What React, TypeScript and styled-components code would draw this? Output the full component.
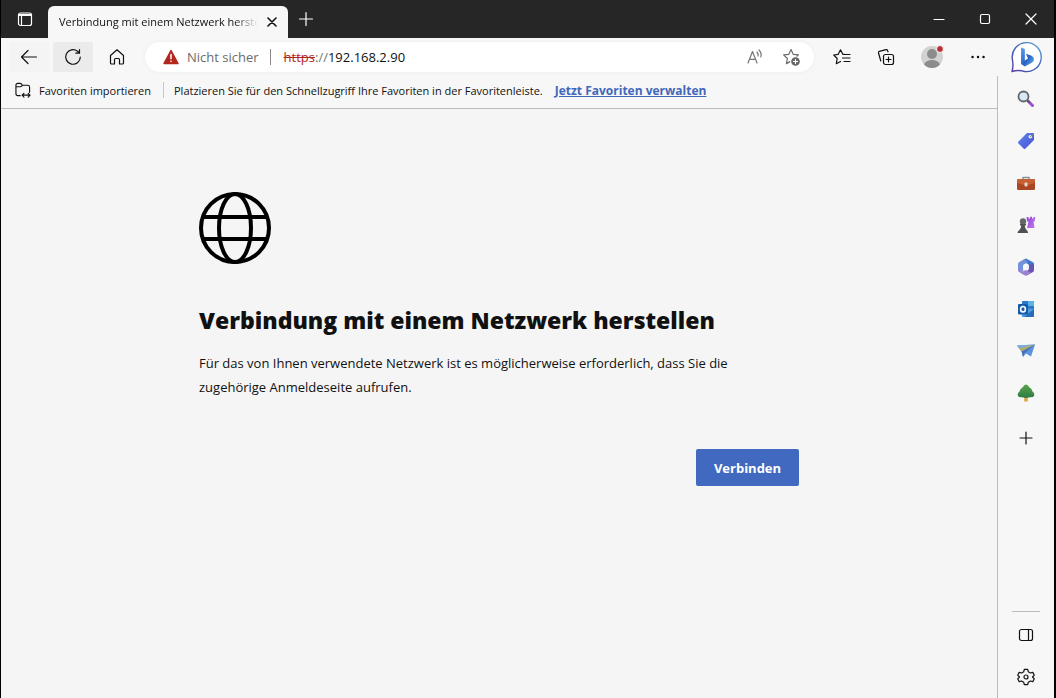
import React from "react";
import styled, { createGlobalStyle } from "styled-components";

const Global = createGlobalStyle`
  *, *::before, *::after { box-sizing: border-box; }
  body {
    margin: 0;
    font-family: "Open Sans", "Noto Sans", sans-serif;
    font-size: 11px;
    color: #111;
  }
  svg { display: block; }
  button { padding: 0; border: 0; background: transparent; font: inherit; color: inherit; }
`;

const BrowserWindow = styled.div`
  display: flex;
  flex-direction: column;
  min-height: 100vh;
  border: solid #000;
  border-width: 0 2px 0 1px;
  background: #f7f7f7;
`;

const TitleBar = styled.header`
  display: flex;
  align-items: stretch;
  height: 38px;
  background: #262626;
  color: #fff;
`;

const TitleButton = styled.button<{ $width: number }>`
  display: flex;
  align-items: center;
  justify-content: center;
  width: ${(p) => p.$width}px;
`;

const Tab = styled.div`
  display: flex;
  align-items: center;
  width: 240px;
  margin-top: 6px;
  padding: 0 6px 0 11px;
  border-radius: 6px 6px 0 0;
  background: #f7f7f7;
  color: #111;
`;

const TabTitle = styled.span`
  flex: 1;
  min-width: 0;
  overflow: hidden;
  white-space: nowrap;
  line-height: 20px;
  mask-image: linear-gradient(to right, #000 88%, transparent 100%);
`;

const TabClose = styled.button`
  display: flex;
  align-items: center;
  justify-content: center;
  width: 20px;
  height: 20px;
  margin-left: 4px;
`;

const WindowControls = styled.div`
  display: flex;
  margin-left: auto;
`;

const Toolbar = styled.nav`
  display: flex;
  align-items: center;
  gap: 4px;
  height: 38px;
  padding: 0 8px;
`;

const ToolButton = styled.button<{ $shade?: string }>`
  display: flex;
  flex: none;
  align-items: center;
  justify-content: center;
  width: 40px;
  height: 30px;
  border-radius: 2px;
  background: ${(p) => p.$shade ?? "transparent"};
`;

const ToolGroup = styled.div<{ $gap: number; $before?: number }>`
  display: flex;
  flex: none;
  align-items: center;
  gap: ${(p) => p.$gap}px;
  margin-left: ${(p) => p.$before ?? 0}px;
`;

const AddressBar = styled.form`
  display: flex;
  flex: 1;
  align-items: center;
  min-width: 0;
  height: 30px;
  margin: 0 4px;
  padding: 0 12px 0 18px;
  border-radius: 15px;
  background: #fff;
  box-shadow: 0 0 4px #ececec;
  font-size: 13px;
  line-height: 20px;
`;

const Security = styled.button`
  display: flex;
  align-items: center;
  gap: 8px;
  padding-right: 11px;
  border-right: 1px solid #8a8a8a;
  margin-right: 13px;
  height: 16px;
  color: #6b6b6b;
  white-space: nowrap;
`;

const Scheme = styled.span`
  color: #767676;
  s { color: #b3261e; }
`;

const UrlInput = styled.input`
  flex: 1;
  min-width: 0;
  padding: 0;
  border: 0;
  outline: 0;
  background: transparent;
  font: inherit;
  color: #111;
`;

const AddressAction = styled.button`
  display: flex;
  align-items: center;
  justify-content: center;
  width: 22px;
  height: 24px;
`;

const Body = styled.div`
  display: flex;
  flex: 1;
`;

const Main = styled.div`
  display: flex;
  flex: 1;
  flex-direction: column;
  min-width: 0;
`;

const FavoritesBar = styled.div`
  display: flex;
  align-items: center;
  height: 33px;
  padding: 0 14px 4px;
  border-bottom: 1px solid #bcbcbc;
  white-space: nowrap;
`;

const ImportButton = styled.button`
  display: flex;
  align-items: center;
  gap: 8px;
  padding-right: 12px;
  margin-right: 10px;
  border-right: 1px solid #c8c8c8;
`;

const ManageLink = styled.a`
  margin-left: 12px;
  font-size: 12px;
  font-weight: 700;
  color: #4068ba;
`;

const Page = styled.main`
  flex: 1;
  padding: 83px 24px 40px;
  background: #f5f5f5;
`;

const Notice = styled.section`
  display: flex;
  flex-direction: column;
  max-width: 600px;
  margin: 0 auto;
`;

const Heading = styled.h1`
  margin: 40px 0 15px;
  font-size: 23px;
  font-weight: 800;
  line-height: 32px;
`;

const Message = styled.p`
  max-width: 560px;
  margin: 0 0 50px;
  font-size: 13px;
  line-height: 24px;
`;

const ConnectButton = styled.button`
  align-self: flex-end;
  min-width: 103px;
  height: 37px;
  border-radius: 2px;
  background: #4069bf;
  color: #fff;
  font-size: 13px;
  font-weight: 700;
`;

const Sidebar = styled.aside`
  display: flex;
  flex: none;
  flex-direction: column;
  align-items: center;
  width: 57px;
  padding-top: 2px;
  border-left: 1px solid #bcbcbc;
`;

const SideButton = styled.button`
  display: flex;
  align-items: center;
  justify-content: center;
  width: 42px;
  height: 42px;
`;

const SideApps = styled.div`
  margin-bottom: 3px;
`;

const SideBottom = styled.div`
  display: flex;
  flex-direction: column;
  align-items: center;
  margin-top: auto;
`;

const SideDivider = styled.hr`
  width: 28px;
  margin: 0 0 2px;
  border: 0;
  border-top: 1px solid #bcbcbc;
`;

type IconProps = { size?: number; box?: number; color?: string; width?: number; children: React.ReactNode };

const Icon = ({ size = 20, box = size, color = "currentColor", width = 1.2, children }: IconProps) => (
  <svg
    width={size}
    height={size}
    viewBox={`0 0 ${box} ${box}`}
    fill="none"
    stroke={color}
    strokeWidth={width}
    strokeLinecap="round"
    strokeLinejoin="round"
    aria-hidden="true"
  >
    {children}
  </svg>
);

const STAR = "M10 2.5 12.2 7.3 17.4 7.9 13.6 11.5 14.6 16.6 10 14.1 5.4 16.6 6.4 11.5 2.6 7.9 7.8 7.3Z";

const Globe = () => (
  <Icon size={72} width={4} color="#000">
    <circle cx="36" cy="36" r="34" />
    <ellipse cx="36" cy="36" rx="16" ry="34" />
    <path d="M5 25H67M5 47H67" />
  </Icon>
);

const BingLogo = () => (
  <Icon size={34} width={1.4}>
    <defs>
      <linearGradient id="bubble" x1="0" y1="1" x2="1" y2="0">
        <stop offset="0" stopColor="#5b3ea5" />
        <stop offset=".5" stopColor="#3b63bb" />
        <stop offset="1" stopColor="#6aa9dc" />
      </linearGradient>
      <linearGradient id="bing" x1="0" y1="0" x2="1" y2="1">
        <stop offset="0" stopColor="#5ba6ee" />
        <stop offset=".55" stopColor="#2c62c4" />
        <stop offset="1" stopColor="#62c2ee" />
      </linearGradient>
    </defs>
    <path d="M3 31.500Q4.600 27 3.500 20A14.500 14.500 0 1 1 13 30.800Q8 30 3 31.500Z" fill="#fff" stroke="url(#bubble)" />
    <path
      d="M12 7.500 15.800 9V20.500L19 18.600 17.300 14.700Q16.800 13.500 18 13.900L22.500 15.700Q25 16.800 25 19.500 25 21.500 22.800 22.800L15.800 26.600 12 23.900Z"
      fill="url(#bing)"
      stroke="none"
    />
  </Icon>
);

const sidebarApps = [
  {
    label: "Suchen",
    art: (
      <>
        <path d="M12.500 12.500 16.500 16.500" stroke="#a24bd0" strokeWidth="3" />
        <path d="M11 11 13 13" stroke="#555" strokeWidth="2" />
        <circle cx="7.500" cy="7.500" r="5" fill="#d9e8f5" stroke="#62666c" strokeWidth="1.800" />
      </>
    ),
  },
  {
    label: "Shopping",
    art: (
      <>
        <path d="M11 2H17Q18 2 18 3V9L9.500 17.500Q8.500 18.500 7.500 17.500L2.500 12.500Q1.500 11.500 2.500 10.500Z" fill="url(#tag)" />
        <circle cx="14.300" cy="5.700" r="1.800" fill="#f2eecb" />
        <path d="M14.500 5.500 17.500 3" stroke="#7a8b72" strokeWidth="1" />
      </>
    ),
  },
  {
    label: "Tools",
    art: (
      <>
        <path d="M7 7V4.500H13V7" stroke="#8c9094" strokeWidth="1.500" />
        <rect x="1" y="6" width="18" height="11" rx="1.500" fill="#a94623" />
        <path d="M1 7.500Q1 6 2.500 6H17.500Q19 6 19 7.500V10L12 12H8L1 10Z" fill="#c65f31" />
        <rect x="8.500" y="9.500" width="3" height="4" rx="1" fill="#e2d9d0" />
      </>
    ),
  },
  {
    label: "Spiele",
    art: (
      <>
        <path d="M10.500 2H12.500V3.500H14V1.800H16V3.500H17.500V2H19.300L18.500 6.500H17.500L18.500 13H11L12.500 6.500H11.200Z" fill="url(#rook)" />
        <circle cx="7" cy="6.500" r="3.200" fill="#66666b" />
        <path d="M4 9H10V10.500H8.700Q8.700 13.500 11 15.500 12 16.200 12 18H1.500Q1.500 16.200 3 15.500 5.300 13.500 5.300 10.500H4Z" fill="#505055" />
      </>
    ),
  },
  {
    label: "Microsoft 365",
    art: (
      <>
        <path d="M10 1.500 17 5.300Q18 6 18 7.200V13L12.500 10V7.500L7.500 4.500 8 2.500Z" fill="#3f78c8" />
        <path d="M18 7V13Q18 14.300 17 15L10.500 18.500 6 16.500 12.500 13V8Z" fill="#6a55b5" />
        <path d="M8 2.300 3 5.300Q2 6 2 7.200V13L7.200 14.500V8L12 5Z" fill="#7392dc" />
        <path d="M2 12V13Q2 14.400 3 15L8.500 18.200Q10 19 11.500 18L15 15.800 10 13 6.500 14.500Z" fill="#9b80d4" />
        <path d="M10 6.700 12.900 8.300V11.700L10 13.300 7.100 11.700V8.300Z" fill="#f7f7f7" />
      </>
    ),
  },
  {
    label: "Outlook",
    art: (
      <>
        <rect x="6" y="2" width="12" height="13" rx="1" fill="#2f78c6" />
        <path d="M12 2H17Q18 2 18 3V7H12Z" fill="#58b4e8" />
        <path d="M5 9 18 10V17Q18 18 17 18H6Z" fill="#4da0de" />
        <path d="M8 18 18 10V17Q18 18 17 18Z" fill="#276dbc" />
        <rect x="2" y="5" width="10" height="10.500" rx="1" fill="#155ba7" />
        <ellipse cx="7" cy="10.200" rx="2.400" ry="2.700" stroke="#fff" strokeWidth="1.600" />
      </>
    ),
  },
  {
    label: "Drop",
    art: (
      <>
        <path d="M1 4.500 19 3.500 15 15.500 10 12.500 7 16 5.500 10.500Z" fill="#5c92dd" />
        <path d="M1 4.500 19 3.500 5.500 10.500Z" fill="#76aee0" />
        <path d="M3 7 19 3.500 5.500 10.500Z" fill="#b3ab70" />
        <path d="M5.800 10.500 19 3.500 8.500 12 7 16Z" fill="#4470ba" />
      </>
    ),
  },
  {
    label: "E-Tree",
    art: (
      <>
        <path d="M8.200 13H11.800V18.500H8.200Z" fill="#dda647" />
        <path d="M10 1.500Q12 1.500 13 4 16 5.500 16.500 8.500 19 10.500 18 13 17 14.500 14 14.200L10 15 6 14.200Q3 14.500 2 13 1 10.500 3.500 8.500 4 5.500 7 4 8 1.500 10 1.500Z" fill="url(#tree)" />
      </>
    ),
  },
];

const SidebarGradients = () => (
  <svg width="0" height="0" aria-hidden="true">
    <defs>
      <linearGradient id="tag" x1="0" y1="0" x2="1" y2="1">
        <stop offset="0" stopColor="#5c85f0" />
        <stop offset="1" stopColor="#4b4fd2" />
      </linearGradient>
      <linearGradient id="rook" x1="0" y1="0" x2="1" y2="1">
        <stop offset="0" stopColor="#8f45dc" />
        <stop offset="1" stopColor="#c47cec" />
      </linearGradient>
      <linearGradient id="tree" x1="0" y1="0" x2="0" y2="1">
        <stop offset="0" stopColor="#5aa54b" />
        <stop offset="1" stopColor="#2d7a43" />
      </linearGradient>
    </defs>
  </svg>
);

export default function App() {
  return (
    <BrowserWindow>
      <Global />
      <TitleBar>
        <TitleButton $width={47} aria-label="Tabaktionen">
          <Icon size={16}>
            <rect x="1.500" y="2" width="13" height="12.500" rx="2" />
            <path d="M2 3.500H14M2 4.500H14M4.500 5V14" />
          </Icon>
        </TitleButton>
        <Tab>
          <TabTitle>Verbindung mit einem Netzwerk herstellen</TabTitle>
          <TabClose aria-label="Tab schließen">
            <Icon size={10} width={1.6}>
              <path d="M1 1 9 9M9 1 1 9" />
            </Icon>
          </TabClose>
        </Tab>
        <TitleButton $width={36} aria-label="Neuer Tab">
          <Icon size={16}>
            <path d="M8 1.500V14.500M1.500 8H14.500" />
          </Icon>
        </TitleButton>
        <WindowControls>
          <TitleButton $width={46} aria-label="Minimieren">
            <Icon size={12}>
              <path d="M1 6.500H11" />
            </Icon>
          </TitleButton>
          <TitleButton $width={46} aria-label="Maximieren">
            <Icon size={12}>
              <rect x="1.500" y="1.500" width="9" height="9" rx="1.500" />
            </Icon>
          </TitleButton>
          <TitleButton $width={46} aria-label="Schließen">
            <Icon size={12}>
              <path d="M1 1 11 11M11 1 1 11" />
            </Icon>
          </TitleButton>
        </WindowControls>
      </TitleBar>

      <Toolbar>
        <ToolGroup $gap={4}>
          <ToolButton $shade="#f4f4f4" aria-label="Zurück">
            <Icon>
              <path d="M2.500 10H17.500M9 3.500 2.500 10 9 16.500" />
            </Icon>
          </ToolButton>
          <ToolButton $shade="#ebebeb" aria-label="Aktualisieren">
            <Icon>
              <path d="M17.300 10A7.300 7.300 0 1 1 14.500 4.200L16.500 6M16.500 2.500V6.200H12.800" />
            </Icon>
          </ToolButton>
          <ToolButton aria-label="Startseite">
            <Icon>
              <path d="M3.500 8.500 10 2.800 16.500 8.500V16Q16.500 17 15.500 17H12.500V12.500Q12.500 11.500 11.500 11.500H8.500Q7.500 11.500 7.500 12.500V17H4.500Q3.500 17 3.500 16Z" />
            </Icon>
          </ToolButton>
        </ToolGroup>

        <AddressBar onSubmit={(e) => e.preventDefault()}>
          <Security type="button">
            <Icon size={16}>
              <path d="M8 1.500 15 14.500H1Z" fill="#b3261e" stroke="#b3261e" strokeWidth="1.500" />
              <path d="M8 5.500V9.800M8 12.300V12.500" stroke="#fff" strokeWidth="1.500" />
            </Icon>
            Nicht sicher
          </Security>
          <Scheme>
            <s>https</s>://
          </Scheme>
          <UrlInput aria-label="Adresse" defaultValue="192.168.2.90" />
          <ToolGroup $gap={14}>
            <AddressAction type="button" aria-label="Laut vorlesen">
              <Icon color="#767676">
                <path d="M3 16 7.500 4.500 12 16M4.500 12.300H10.500M12 5Q13.500 6.800 13 9M14 3Q17 6 15.800 10" />
              </Icon>
            </AddressAction>
            <AddressAction type="button" aria-label="Zu Favoriten hinzufügen">
              <Icon color="#6b6b6b">
                <path d={STAR} />
                <circle cx="14.500" cy="14.500" r="5.300" fill="#fff" stroke="none" />
                <circle cx="14.500" cy="14.500" r="4.300" fill="#666" stroke="none" />
                <path d="M14.500 12.500V16.500M12.500 14.500H16.500" stroke="#fff" />
              </Icon>
            </AddressAction>
          </ToolGroup>
        </AddressBar>

        <ToolGroup $gap={4}>
          <ToolButton aria-label="Favoriten">
            <Icon>
              <path d="M12.500 7.300H10.800L8.500 2.800 6.200 7.300 1.700 8 5.200 11.500 4.300 16.700 8.500 14.500M12 7.500H18M10.500 11H18M12 14.500H18" />
            </Icon>
          </ToolButton>
          <ToolButton aria-label="Sammlungen">
            <Icon>
              <rect x="7.500" y="7.500" width="10" height="10" rx="2" />
              <path d="M12.500 10V15M10 12.500H15M4.800 14 2.500 6Q2.200 4.800 3.400 4.400L10 2.700Q11.200 2.400 11.600 3.600L12 4.800" />
            </Icon>
          </ToolButton>
        </ToolGroup>
        <ToolGroup $gap={6} $before={2}>
          <ToolButton aria-label="Profil">
            <Icon size={24}>
              <circle cx="12" cy="12" r="11" fill="#d2d2d0" stroke="none" />
              <circle cx="12" cy="9" r="5" fill="#8c8c8c" stroke="none" />
              <path d="M4 19.500Q6 15 12 15T20 19.500Q16.500 23 12 23T4 19.500Z" fill="#8c8c8c" stroke="none" />
              <circle cx="20" cy="4" r="3.500" fill="#b93232" stroke="#f7f7f7" strokeWidth="1" />
            </Icon>
          </ToolButton>
          <ToolButton aria-label="Einstellungen und mehr">
            <Icon>
              <path d="M4.500 10H4.600M10 10H10.100M15.500 10H15.600" strokeWidth="2.400" />
            </Icon>
          </ToolButton>
        </ToolGroup>
        <ToolGroup $gap={4} $before={4}>
          <ToolButton aria-label="Bing Chat">
            <BingLogo />
          </ToolButton>
        </ToolGroup>
      </Toolbar>

      <Body>
        <Main>
          <FavoritesBar>
            <ImportButton>
              <Icon size={16} box={17}>
                <path d="M5.500 14.500H3Q1 14.500 1 12.500V3.500Q1 1.500 3 1.500H5.500Q6.500 1.500 8 3.500H13.500Q15.500 3.500 15.500 5.500V11M1 5H5.500Q6.500 5 8 3.500M8 14H15.500M9.500 12 7.500 14 9.500 16M14 12 16 14 14 16" />
              </Icon>
              Favoriten importieren
            </ImportButton>
            <span>Platzieren Sie für den Schnellzugriff Ihre Favoriten in der Favoritenleiste.</span>
            <ManageLink href="#favoriten">Jetzt Favoriten verwalten</ManageLink>
          </FavoritesBar>
          <Page>
            <Notice>
              <Globe />
              <Heading>Verbindung mit einem Netzwerk herstellen</Heading>
              <Message>
                Für das von Ihnen verwendete Netzwerk ist es möglicherweise erforderlich, dass Sie die zugehörige
                Anmeldeseite aufrufen.
              </Message>
              <ConnectButton>Verbinden</ConnectButton>
            </Notice>
          </Page>
        </Main>

        <Sidebar>
          <SidebarGradients />
          <SideApps>
            {sidebarApps.map((app) => (
              <SideButton key={app.label} aria-label={app.label}>
                <Icon size={20} color="none">
                  {app.art}
                </Icon>
              </SideButton>
            ))}
          </SideApps>
          <SideButton aria-label="Anpassen">
            <Icon size={14}>
              <path d="M7 1V13M1 7H13" />
            </Icon>
          </SideButton>
          <SideBottom>
            <SideDivider />
            <SideButton aria-label="Randleiste">
              <Icon size={16}>
                <rect x="1.500" y="2.500" width="13" height="11" rx="2" />
                <path d="M10.500 2.500V13.500" />
              </Icon>
            </SideButton>
            <SideButton aria-label="Einstellungen">
              <Icon size={18}>
                <circle cx="9" cy="9" r="2" />
                <path d="M7.300 1.300H10.700L11.300 3.800 13.400 5 15.800 4.300 17.300 7.200 15.500 9 17.300 10.800 15.800 13.700 13.400 13 11.300 14.200 10.700 16.700H7.300L6.700 14.200 4.600 13 2.200 13.700.7 10.800 2.500 9 .7 7.200 2.200 4.300 4.600 5 6.700 3.800Z" />
              </Icon>
            </SideButton>
          </SideBottom>
        </Sidebar>
      </Body>
    </BrowserWindow>
  );
}
